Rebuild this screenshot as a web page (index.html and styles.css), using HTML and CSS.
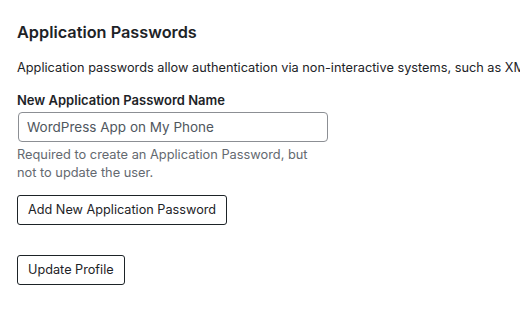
FILE: index.html
```html
<!DOCTYPE html>
<html lang="en">
  <head>
    <meta charset="UTF-8" />
    <meta name="viewport" content="width=device-width, initial-scale=1.0" />
    <title>Application Passwords</title>
    <link rel="stylesheet" href="styles.css">
  </head>
  <body>
    <div class="wrap">
      <h2 class="section-title">Application Passwords</h2>
      <p class="intro">
        Application passwords allow authentication via non-interactive systems, such as XML-RPC or the REST API, without providing your actual password.
      </p>

      <div class="field">
        <label class="field-label" for="app-pass-name">New Application Password Name</label>
        <input type="text" id="app-pass-name" class="text-input" placeholder="WordPress App on My Phone" />
        <p class="description">Required to create an Application Password, but not to update the user.</p>
      </div>

      <button type="button" class="button add-button">Add New Application Password</button>

      <div class="submit">
        <button type="submit" class="button">Update Profile</button>
      </div>
    </div>
  </body>
</html>
```

FILE: styles.css
```css
/* profile - application passwords */

* {
  margin: 0;
  padding: 0;
  box-sizing: border-box;
}

body {
  background-color: #fff;
  color: #1d2327;
  font-family: Inter, "Liberation Sans", sans-serif;
  font-size: 13px;
  line-height: 1.4;
  overflow: hidden;
}

.wrap {
  padding: 22px 17px 0 17px;
  overflow: hidden; /* long intro line runs off the right edge */
}

.section-title {
  font-size: 16.3px;
  font-weight: 600;
  color: #1d2327;
  line-height: 20px;
  margin-bottom: 17px;
}

.intro {
  font-size: 12.75px;
  line-height: 18px;
  margin-bottom: 15px;
  white-space: nowrap;
}

.field-label {
  display: block;
  font-weight: 600;
  font-size: 13px;
  line-height: 17px;
  margin-bottom: 4px;
}

.text-input {
  display: block;
  width: 310px;
  height: 30px;
  margin-left: 1px;
  margin-top: -1px;
  padding: 0 8px;
  border: 1px solid #8c8f94;
  border-radius: 4px;
  font-family: inherit;
  font-size: 13.5px;
  color: #2c3338;
  background: #fff;
}

.text-input::placeholder {
  color: #50575e;
  opacity: 1;
}

.description {
  color: #646970;
  font-size: 12.8px;
  line-height: 18px;
  margin-top: 4px;
  width: 300px;
}

.button {
  display: inline-block;
  height: 30px;
  padding: 0 10px;
  border: 1px solid #1d2327;
  border-radius: 3px;
  background: #fff;
  color: #1d2327;
  font-family: inherit;
  font-size: 12.7px;
  line-height: 28px;
  cursor: pointer;
}

.add-button {
  margin-top: 13px;
}

.submit {
  padding-top: 30px;
}
```
